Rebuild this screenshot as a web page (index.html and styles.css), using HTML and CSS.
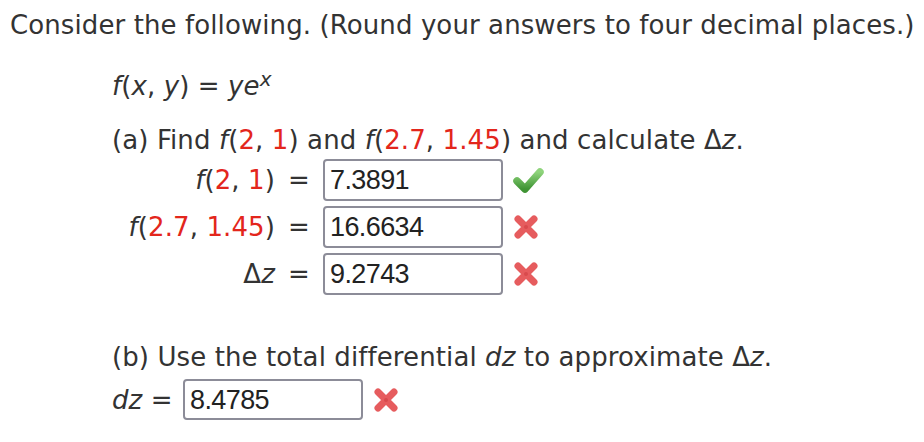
FILE: index.html
```html
<!DOCTYPE html>
<html>
<head>
<meta charset="utf-8">
<link rel="stylesheet" href="styles.css">
</head>
<body>
<div class="page">
  <p class="intro">Consider the following. (Round your answers to four decimal places.)</p>
  <div class="indent">
    <p class="func"><i>f</i>(<i>x</i>, <i>y</i>) = <i>ye</i><sup class="exp"><i>x</i></sup></p>
    <p class="part">(a) Find <i>f</i>(<span class="red">2</span>, <span class="red">1</span>) and <i>f</i>(<span class="red">2.7</span>, <span class="red">1.45</span>) and calculate Δ<i>z</i>.</p>
    <div class="rows">
      <div class="label"><i>f</i>(<span class="red">2</span>, <span class="red">1</span>)</div>
      <div class="eq">=</div>
      <div class="box">7.3891</div>
      <div class="icon">
        <svg width="33" height="28" viewBox="0 0 33 28"><defs><linearGradient id="g" x1="0" y1="0" x2="0" y2="1"><stop offset="0" stop-color="#8fd47c"/><stop offset="1" stop-color="#3f9434"/></linearGradient></defs><polyline points="5,15 13,23 28,6" fill="none" stroke="url(#g)" stroke-width="7.5" stroke-linecap="round" stroke-linejoin="round"/></svg>
      </div>
      <div class="label"><i>f</i>(<span class="red">2.7</span>, <span class="red">1.45</span>)</div>
      <div class="eq">=</div>
      <div class="box">16.6634</div>
      <div class="icon"><svg width="28" height="26" viewBox="0 0 28 26"><path d="M6 5 L22 21 M22 5 L6 21" stroke="#e65c5e" stroke-width="7" stroke-linecap="round"/><circle cx="14" cy="13" r="2" fill="#d94a4d"/></svg></div>
      <div class="label">Δ<i>z</i></div>
      <div class="eq">=</div>
      <div class="box">9.2743</div>
      <div class="icon"><svg width="28" height="26" viewBox="0 0 28 26"><path d="M6 5 L22 21 M22 5 L6 21" stroke="#e65c5e" stroke-width="7" stroke-linecap="round"/><circle cx="14" cy="13" r="2" fill="#d94a4d"/></svg></div>
    </div>
    <p class="partb">(b) Use the total differential <i>dz</i> to approximate Δ<i>z</i>.</p>
    <div class="dzrow">
      <span class="dzlabel"><i>dz</i> =</span>
      <div class="box">8.4785</div>
      <div class="icon"><svg width="28" height="26" viewBox="0 0 28 26"><path d="M6 5 L22 21 M22 5 L6 21" stroke="#e65c5e" stroke-width="7" stroke-linecap="round"/><circle cx="14" cy="13" r="2" fill="#d94a4d"/></svg></div>
    </div>
  </div>
</div>
</body>
</html>
```
FILE: styles.css
```css
html, body {
  margin: 0;
  padding: 0;
  background: #fff;
}
.page {
  font-family: "DejaVu Sans", Verdana, sans-serif;
  font-size: 26px;
  letter-spacing: 0.1px;
  color: #333;
  padding: 9px 0 0 10px;
}
p { margin: 0; }
.intro { line-height: 32px; }
.indent { margin-left: 102px; }
.func { margin-top: 29px; line-height: 32px; }
.exp { font-size: 20px; vertical-align: 9px; line-height: 0; }
.part { margin-top: 22px; line-height: 32px; }
.red { color: #e3261c; }
.rows {
  display: grid;
  grid-template-columns: 163px 48px 180px auto;
  row-gap: 5px;
  align-items: center;
  margin-top: 3px;
}
.label { text-align: right; white-space: nowrap; }
.eq { text-align: center; }
.box {
  box-sizing: border-box;
  width: 180px;
  height: 42px;
  border: 2px solid #8c8c98;
  border-radius: 4px;
  font-family: "Liberation Sans", Arial, sans-serif;
  font-size: 27px;
  letter-spacing: -0.6px;
  color: #222;
  padding: 4px 0 0 5px;
  line-height: 31px;
}
.icon { padding-left: 9px; display: flex; align-items: center; }
.partb { margin-top: 46px; line-height: 32px; }
.dzrow {
  display: flex;
  align-items: center;
  margin-top: 6px;
}
.dzrow .box { height: 41px; }
.dzlabel { width: 71px; white-space: nowrap; }
```
